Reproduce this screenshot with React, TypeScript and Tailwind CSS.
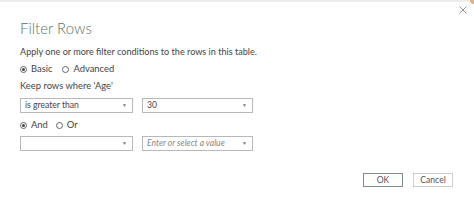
import React from 'react';

const font = { fontFamily: 'Lato, "Open Sans", Arial, sans-serif' };

function Radio({ label, checked }: { label: string; checked?: boolean }) {
    return (
        <span className="flex items-center gap-[4px]">
            <span className="w-[7px] h-[7px] rounded-full border border-[#666] flex items-center justify-center">
                {checked && <span className="w-[3px] h-[3px] rounded-full bg-[#444]" />}
            </span>
            <span>{label}</span>
        </span>
    );
}

function Select({ value, placeholder, width }: { value?: string; placeholder?: string; width: string }) {
    return (
        <div className={`${width} h-[15px] border border-[#b8b8b8] flex items-center justify-between pl-[4px] pr-[5px] text-[8.6px] whitespace-nowrap`}>
            {value ? (
                <span className="text-[#444]">{value}</span>
            ) : (
                <span className="italic text-[#888]">{placeholder}</span>
            )}
            <span className="text-[5px] text-[#777]">▼</span>
        </div>
    );
}

export default function App() {
    return (
        <div className="w-[474px] h-[207px] bg-white relative overflow-hidden text-[#444]" style={font}>
            {/* top edge */}
            <div className="h-[2px] bg-[#ececec]" />
            <div className="absolute right-0 top-0 w-[4px] h-[4px] bg-[#e8b07a] rounded-bl-full" />

            {/* close */}
            <div className="absolute right-[7px] top-[6px]">
                <svg width="8" height="8" viewBox="0 0 8 8">
                    <path d="M0.5 0.5 L7.5 7.5 M7.5 0.5 L0.5 7.5" stroke="#888" strokeWidth="0.9" />
                </svg>
            </div>

            <div className="flex flex-col pl-[20px] pt-[16px]">
                <div className="text-[15px] leading-[20px] font-light text-[#56786a]">Filter Rows</div>
                <div className="mt-[7px] text-[9.1px] leading-[13px]">
                    Apply one or more filter conditions to the rows in this table.
                </div>
                <div className="mt-[5px] flex items-center gap-[10px] text-[9.4px] leading-[12px]">
                    <Radio label="Basic" checked />
                    <Radio label="Advanced" />
                </div>
                <div className="mt-[5px] text-[9.4px] leading-[12px]">Keep rows where 'Age'</div>

                <div className="mt-[6px] flex gap-[9px]">
                    <Select value="is greater than" width="w-[113px]" />
                    <Select value="30" width="w-[111px]" />
                </div>
                <div className="mt-[6px] flex items-center gap-[8px] text-[9.4px] leading-[12px]">
                    <Radio label="And" checked />
                    <Radio label="Or" />
                </div>
                <div className="mt-[5px] flex gap-[9px]">
                    <Select value="" placeholder="" width="w-[113px]" />
                    <Select placeholder="Enter or select a value" width="w-[111px]" />
                </div>

                <div className="mt-[22px] flex justify-end gap-[10px] pr-[21px] text-[8.6px]">
                    <button className="w-[40px] h-[14px] border border-[#7d8c84] text-[#555] flex items-center justify-center">
                        OK
                    </button>
                    <button className="w-[40px] h-[14px] border border-[#cfcfcf] text-[#555] flex items-center justify-center">
                        Cancel
                    </button>
                </div>
            </div>
        </div>
    );
}
